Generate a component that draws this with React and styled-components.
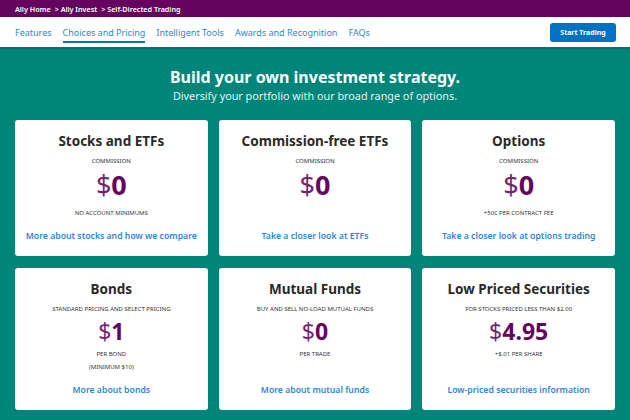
import React from "react";
import styled, { createGlobalStyle } from "styled-components";

const GlobalStyle = createGlobalStyle`
  body {
    margin: 0;
    font-family: "Noto Sans", "Open Sans", sans-serif;
    background: #fff;
  }
`;

const plans = [
  [
    {
      title: "Stocks and ETFs",
      label: "COMMISSION",
      price: "0",
      notes: ["NO ACCOUNT MINIMUMS"],
      link: "More about stocks and how we compare",
    },
    {
      title: "Commission-free ETFs",
      label: "COMMISSION",
      price: "0",
      notes: [],
      link: "Take a closer look at ETFs",
    },
    {
      title: "Options",
      label: "COMMISSION",
      price: "0",
      notes: ["+50¢ PER CONTRACT FEE"],
      link: "Take a closer look at options trading",
    },
  ],
  [
    {
      title: "Bonds",
      label: "STANDARD PRICING AND SELECT PRICING",
      price: "1",
      notes: ["PER BOND", "(MINIMUM $10)"],
      link: "More about bonds",
    },
    {
      title: "Mutual Funds",
      label: "BUY AND SELL NO-LOAD MUTUAL FUNDS",
      price: "0",
      notes: ["PER TRADE"],
      link: "More about mutual funds",
    },
    {
      title: "Low Priced Securities",
      label: "FOR STOCKS PRICED LESS THAN $2.00",
      price: "4.95",
      notes: ["+$.01 PER SHARE"],
      link: "Low-priced securities information",
    },
  ],
];

const navItems = [
  "Features",
  "Choices and Pricing",
  "Intelligent Tools",
  "Awards and Recognition",
  "FAQs",
];

function App() {
  return (
    <Page>
      <GlobalStyle />
      <Breadcrumb>
        <span>Ally Home</span>
        <span>&gt; Ally Invest</span>
        <span>&gt; Self-Directed Trading</span>
      </Breadcrumb>
      <Nav>
        <NavLinks>
          {navItems.map((item, i) => (
            <NavLink key={item} $active={i === 1}>
              {item}
            </NavLink>
          ))}
        </NavLinks>
        <TradeButton>Start Trading</TradeButton>
      </Nav>
      <Section>
        <Heading>Build your own investment strategy.</Heading>
        <Sub>Diversify your portfolio with our broad range of options.</Sub>
        <Grid>
          {plans.map((row, r) =>
            row.map((p) => (
              <Card key={p.title}>
                <CardTitle>{p.title}</CardTitle>
                <Label>{p.label}</Label>
                <Price $small={r === 1}>
                  <Dollar>$</Dollar>
                  {p.price}
                </Price>
                {p.notes.map((n) => (
                  <Note key={n} $small={r === 1}>
                    {n}
                  </Note>
                ))}
                <CardLink>{p.link}</CardLink>
              </Card>
            ))
          )}
        </Grid>
      </Section>
    </Page>
  );
}

export default App;

const Page = styled.div`
  width: 630px;
  height: 420px;
  overflow: hidden;
  background: #00857a;
`;

const Breadcrumb = styled.div`
  height: 17px;
  background: #650360;
  color: #fff;
  display: flex;
  align-items: center;
  gap: 4px;
  padding-left: 15px;
  font-size: 7.2px;
  font-weight: 600;
`;

const Nav = styled.nav`
  height: 30px;
  background: #fff;
  display: flex;
  align-items: flex-start;
  justify-content: space-between;
  padding: 0 14px 0 15px;
  border-bottom: 2px solid #0a7268;
`;

const NavLinks = styled.div`
  display: flex;
  gap: 11px;
  padding-top: 10px;
`;

const NavLink = styled.a`
  font-size: 9px;
  line-height: 12px;
  color: #2f87d4;
  padding-bottom: 2px;
  border-bottom: 2px solid ${(p) => (p.$active ? "#0071c4" : "transparent")};
`;

const TradeButton = styled.button`
  margin-top: 6px;
  width: 66px;
  height: 19px;
  border: none;
  border-radius: 3px;
  background: #0071c4;
  color: #fff;
  font-family: inherit;
  font-size: 7px;
  font-weight: 700;
  padding: 0;
`;

const Section = styled.section`
  padding: 17px 15px 0;
`;

const Heading = styled.h1`
  margin: 0;
  color: #fff;
  text-align: center;
  font-size: 16px;
  font-weight: 700;
  line-height: 22px;
`;

const Sub = styled.p`
  margin: 0;
  color: #e6f3f1;
  text-align: center;
  font-size: 10.8px;
  line-height: 16px;
`;

const Grid = styled.div`
  margin-top: 16px;
  display: grid;
  grid-template-columns: repeat(3, 1fr);
  column-gap: 11px;
  row-gap: 12px;
`;

const Card = styled.div`
  background: #fff;
  border-radius: 3px;
  display: flex;
  flex-direction: column;
  align-items: center;
  padding: 12px 6px 13px;
`;

const CardTitle = styled.h2`
  margin: 0;
  font-size: 13.5px;
  font-weight: 700;
  color: #2a2a2a;
  line-height: 18px;
`;

const Label = styled.div`
  margin-top: 7px;
  font-size: 6px;
  color: #333;
  line-height: 9px;
`;

const Price = styled.div`
  color: #650360;
  font-size: ${(p) => (p.$small ? "23px" : "27px")};
  line-height: ${(p) => (p.$small ? "26px" : "30px")};
  font-weight: 700;
  margin-top: 4px;
`;

const Dollar = styled.span`
  font-weight: 400;
  color: #74236f;
`;

const Note = styled.div`
  font-size: 6px;
  color: #333;
  line-height: 9px;
  margin-top: ${(p) => (p.$small ? "6px" : "9px")};
  & + & {
    margin-top: 4px;
  }
`;

const CardLink = styled.a`
  margin-top: auto;
  padding-top: 11px;
  font-size: 8.7px;
  font-weight: 600;
  color: #2f87d4;
  line-height: 14px;
`;
